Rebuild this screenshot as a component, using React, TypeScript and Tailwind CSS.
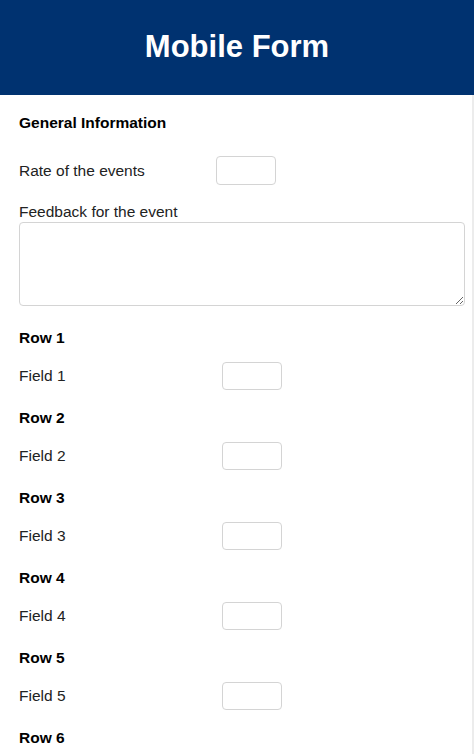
import React from 'react'

const rows = [1, 2, 3, 4, 5, 6]

export default function App() {
  return (
    <div className="min-h-screen bg-white text-[#222]" style={{ fontFamily: '"Liberation Sans", Arial, sans-serif' }}>
      {/* Header */}
      <header className="h-[95px] bg-[#003270] flex items-center justify-center">
        <h1 className="text-[31px] font-bold text-white leading-none -mt-[2px]">Mobile Form</h1>
      </header>

      <main className="border-r-2 border-[#ececec] pl-[19px] pr-[7px] pt-[19px] pb-10">
        <h2 className="text-[15.5px] font-bold leading-[18px] text-black">General Information</h2>

        <div className="mt-[24px] flex items-center h-[29px]">
          <label className="w-[197px] text-[15.5px] leading-[18px]">Rate of the events</label>
          <input type="text" className="w-[60px] h-[29px] rounded-[4px] border border-[#d4d4d4] bg-white" />
        </div>

        <label className="mt-[18px] block text-[15.5px] leading-[18px]">Feedback for the event</label>
        <textarea className="mt-px block w-[446px] h-[84px] rounded-[4px] border border-[#d4d4d4] bg-white resize" />

        <div className="mt-[23px] flex flex-col gap-[19px]">
          {rows.map((n) => (
            <section key={n}>
              <h3 className="text-[15.5px] font-bold leading-[18px] text-black">Row {n}</h3>
              <div className="mt-[15px] flex items-center h-[28px]">
                <label className="w-[203px] text-[15.5px] leading-[18px]">Field {n}</label>
                <input type="text" className="w-[60px] h-[28px] rounded-[4px] border border-[#d4d4d4] bg-white" />
              </div>
            </section>
          ))}
        </div>
      </main>
    </div>
  )
}
